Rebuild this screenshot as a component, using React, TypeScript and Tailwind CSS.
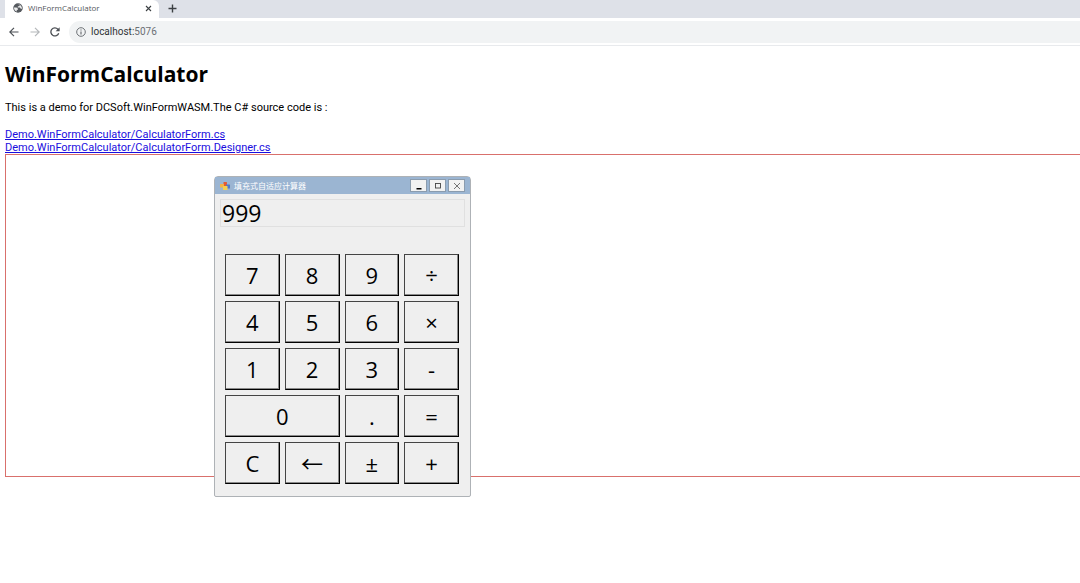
import React, { useState } from "react";

// Type definition for a calculator key
interface Key {
  label: string;
  name: string;
  wide?: boolean;
}

const keys: Key[] = [
  { label: "7", name: "7" },
  { label: "8", name: "8" },
  { label: "9", name: "9" },
  { label: "÷", name: "Divide" },
  { label: "4", name: "4" },
  { label: "5", name: "5" },
  { label: "6", name: "6" },
  { label: "×", name: "Multiply" },
  { label: "1", name: "1" },
  { label: "2", name: "2" },
  { label: "3", name: "3" },
  { label: "-", name: "Subtract" },
  { label: "0", name: "0", wide: true },
  { label: ".", name: "Decimal point" },
  { label: "=", name: "Equals" },
  { label: "C", name: "Clear" },
  { label: "←", name: "Backspace" },
  { label: "±", name: "Change sign" },
  { label: "+", name: "Add" },
];

const calculate = (a: number, b: number, operator: string) => {
  if (operator === "+") return a + b;
  if (operator === "-") return a - b;
  if (operator === "×") return a * b;
  return a / b;
};

const BrowserBar: React.FC = () => (
  <header>
    {/* Tab strip */}
    <div className="flex h-[18px] bg-[#dee1e8] pl-[5px]">
      <div className="flex w-[154px] items-center rounded-tr-md bg-white pr-[7px] pb-[2px] pl-2">
        <svg className="size-[10px] shrink-0" viewBox="0 0 20 20" aria-hidden="true">
          <circle cx="10" cy="10" r="9.5" fill="#55595e" />
          <path d="M2 9h5l3 2.500v2H7.500V17C4 16 2 13 2 9z" fill="#fff" opacity="0.9" />
          <path d="M9 2.500l5 .5-1.500 3.500H10L9 9h5l1.500 2.500H18c0-4-2.500-7-5-8z" fill="#fff" opacity="0.9" />
        </svg>
        <span className="ml-[5px] flex-1 text-[8px] leading-4 text-[#54575b]">WinFormCalculator</span>
        <button type="button" aria-label="Close tab">
          <svg className="size-[7px]" viewBox="0 0 7 7" stroke="#3c4043" strokeWidth="1.1">
            <path d="M1 1l5 5M6 1l-5 5" />
          </svg>
        </button>
      </div>
      <button type="button" aria-label="New tab" className="ml-[9px] flex items-center pb-[2px]">
        <svg className="size-[9px]" viewBox="0 0 9 9" stroke="#3c4043" strokeWidth="1.4">
          <path d="M4.500 .5v8M.5 4.500h8" />
        </svg>
      </button>
    </div>

    {/* Address bar */}
    <div className="flex h-[28px] items-center border-b border-[#e8eaed] bg-white pl-[9px]">
      <button type="button" aria-label="Back">
        <svg className="size-[10px]" viewBox="0 0 10 10" fill="none" stroke="#4d5156" strokeWidth="1.2">
          <path d="M9.500 5H1M5 .8L.8 5 5 9.200" />
        </svg>
      </button>
      <button type="button" aria-label="Forward" className="ml-[11px]">
        <svg className="size-[10px]" viewBox="0 0 10 10" fill="none" stroke="#b4b7ba" strokeWidth="1.2">
          <path d="M.5 5H9M5 .8L9.200 5 5 9.200" />
        </svg>
      </button>
      <button type="button" aria-label="Reload" className="ml-[10px]">
        <svg className="size-[10px]" viewBox="0 0 10 10" fill="none" stroke="#4d5156" strokeWidth="1.3">
          <path d="M8.700 6.200A4 4 0 1 1 7.900 2.300L9 3.500" />
          <path d="M9.600 .3v4H5.600z" fill="#4d5156" stroke="none" />
        </svg>
      </button>
      <div className="ml-[9px] flex h-[22px] flex-1 items-center rounded-l-full bg-[#f1f3f4] pl-[7px] font-[Roboto,sans-serif] text-[10px] leading-4 text-[#6b6f74]">
        <svg className="mr-[5px] size-[10px]" viewBox="0 0 10 10" fill="none" stroke="#5f6368" aria-hidden="true">
          <circle cx="5" cy="5" r="4.300" strokeWidth="0.9" />
          <path d="M5 4.500v3M5 2.500v1.100" strokeWidth="1.1" />
        </svg>
        <span className="text-[#303337]">localhost:</span>5076
      </div>
    </div>
  </header>
);

const CalculatorWindow: React.FC = () => {
  const [display, setDisplay] = useState("999");
  const [stored, setStored] = useState<number | null>(null);
  const [operator, setOperator] = useState("");
  const [fresh, setFresh] = useState(true);

  const handlePress = (label: string) => {
    if (/^\d$/.test(label)) {
      setDisplay(fresh || display === "0" ? label : display + label);
      setFresh(false);
    } else if (label === ".") {
      if (fresh) setDisplay("0.");
      else if (!display.includes(".")) setDisplay(display + ".");
      setFresh(false);
    } else if (label === "C") {
      setDisplay("0");
      setStored(null);
      setOperator("");
      setFresh(true);
    } else if (label === "←") {
      setDisplay(display.slice(0, -1) || "0");
    } else if (label === "±") {
      setDisplay(String(-Number(display)));
    } else {
      const value = Number(display);
      const result = stored !== null && operator && !fresh ? calculate(stored, value, operator) : value;
      setDisplay(String(result));
      setStored(label === "=" ? null : result);
      setOperator(label === "=" ? "" : label);
      setFresh(true);
    }
  };

  return (
    <section className="absolute top-[21px] left-[208px] w-[257px] rounded-t-sm rounded-b-xs border border-[#aeb2b6] bg-[#efefef] pb-3">
      {/* Title bar */}
      <div className="flex h-[17px] items-center bg-[#9bb5d2] pr-[5px] pl-[5px]">
        <svg className="h-[8px] w-[10px]" viewBox="0 0 20 16" aria-hidden="true">
          <rect x="7" y="0" width="7" height="8" rx="1" fill="#e65a32" />
          <rect x="0" y="4" width="8" height="7" rx="1" fill="#f3b446" />
          <rect x="12" y="5" width="8" height="8" rx="1" fill="#4f78cc" />
          <rect x="6" y="8" width="9" height="8" rx="1" fill="#f6cf51" />
        </svg>
        <h2 className="ml-1 flex-1 text-[8px] leading-4 text-white">填充式自适应计算器</h2>
        <div className="flex gap-[2px]">
          <button type="button" aria-label="Minimize" className="flex h-[13px] w-[17px] items-center justify-center border border-[#8b9cae] bg-[#f2f2f2]">
            <svg className="size-2" viewBox="0 0 8 8"><path d="M1.500 6h5v1.500h-5z" fill="#000" /></svg>
          </button>
          <button type="button" aria-label="Maximize" className="flex h-[13px] w-[17px] items-center justify-center border border-[#8b9cae] bg-[#f2f2f2]">
            <svg className="size-2" viewBox="0 0 8 8"><rect x="1.500" y="1.500" width="5" height="4.500" fill="none" stroke="#444" strokeWidth="0.9" /></svg>
          </button>
          <button type="button" aria-label="Close" className="flex h-[13px] w-[17px] items-center justify-center border border-[#8b9cae] bg-[#f2f2f2]">
            <svg className="size-2" viewBox="0 0 8 8"><path d="M1 1l6 6M7 1l-6 6" stroke="#666" strokeWidth="0.9" /></svg>
          </button>
        </div>
      </div>

      <div className="px-[5px] pt-[5px]">
        <input
          type="text"
          readOnly
          aria-label="Result"
          value={display}
          className="block h-7 w-full border border-[#e0e0e0] bg-[#efefef] px-px text-[23px] text-black outline-none"
        />
      </div>

      {/* Keypad */}
      <div className="mt-[27px] grid grid-cols-4 gap-[5px] pr-[11px] pl-[10px]">
        {keys.map((key) => (
          <button
            key={key.label}
            type="button"
            aria-label={key.name}
            onClick={() => handlePress(key.label)}
            className={`h-[42px] border border-t-[#444] border-r-black border-b-black border-l-[#444] text-[22px] leading-8 text-black shadow-[inset_-1px_-1px_0_#8a8a8a] ${key.wide ? "col-span-2" : ""}`}
          >
            {key.label}
          </button>
        ))}
      </div>
    </section>
  );
};

const App: React.FC = () => {
  return (
    <div className="min-h-screen bg-white font-['Open_Sans','Noto_Sans_CJK_SC',sans-serif] text-black">
      <BrowserBar />
      <main className="pt-3 pl-[5px]">
        <h1 className="text-[21px] leading-8 font-bold">WinFormCalculator</h1>
        <p className="mt-[10px] font-[Roboto,sans-serif] text-[11px] leading-4">This is a demo for DCSoft.WinFormWASM.The C# source code is :</p>
        <div className="mt-3 flex flex-col items-start font-[Roboto,sans-serif] text-[11px] leading-[13px] text-[#1a0dde] underline">
          <a href="#CalculatorForm.cs">Demo.WinFormCalculator/CalculatorForm.cs</a>
          <a href="#CalculatorForm.Designer.cs">Demo.WinFormCalculator/CalculatorForm.Designer.cs</a>
        </div>
        <div className="relative h-[323px] border-y border-l border-[#d9706c]">
          <CalculatorWindow />
        </div>
      </main>
    </div>
  );
};

export default App;
